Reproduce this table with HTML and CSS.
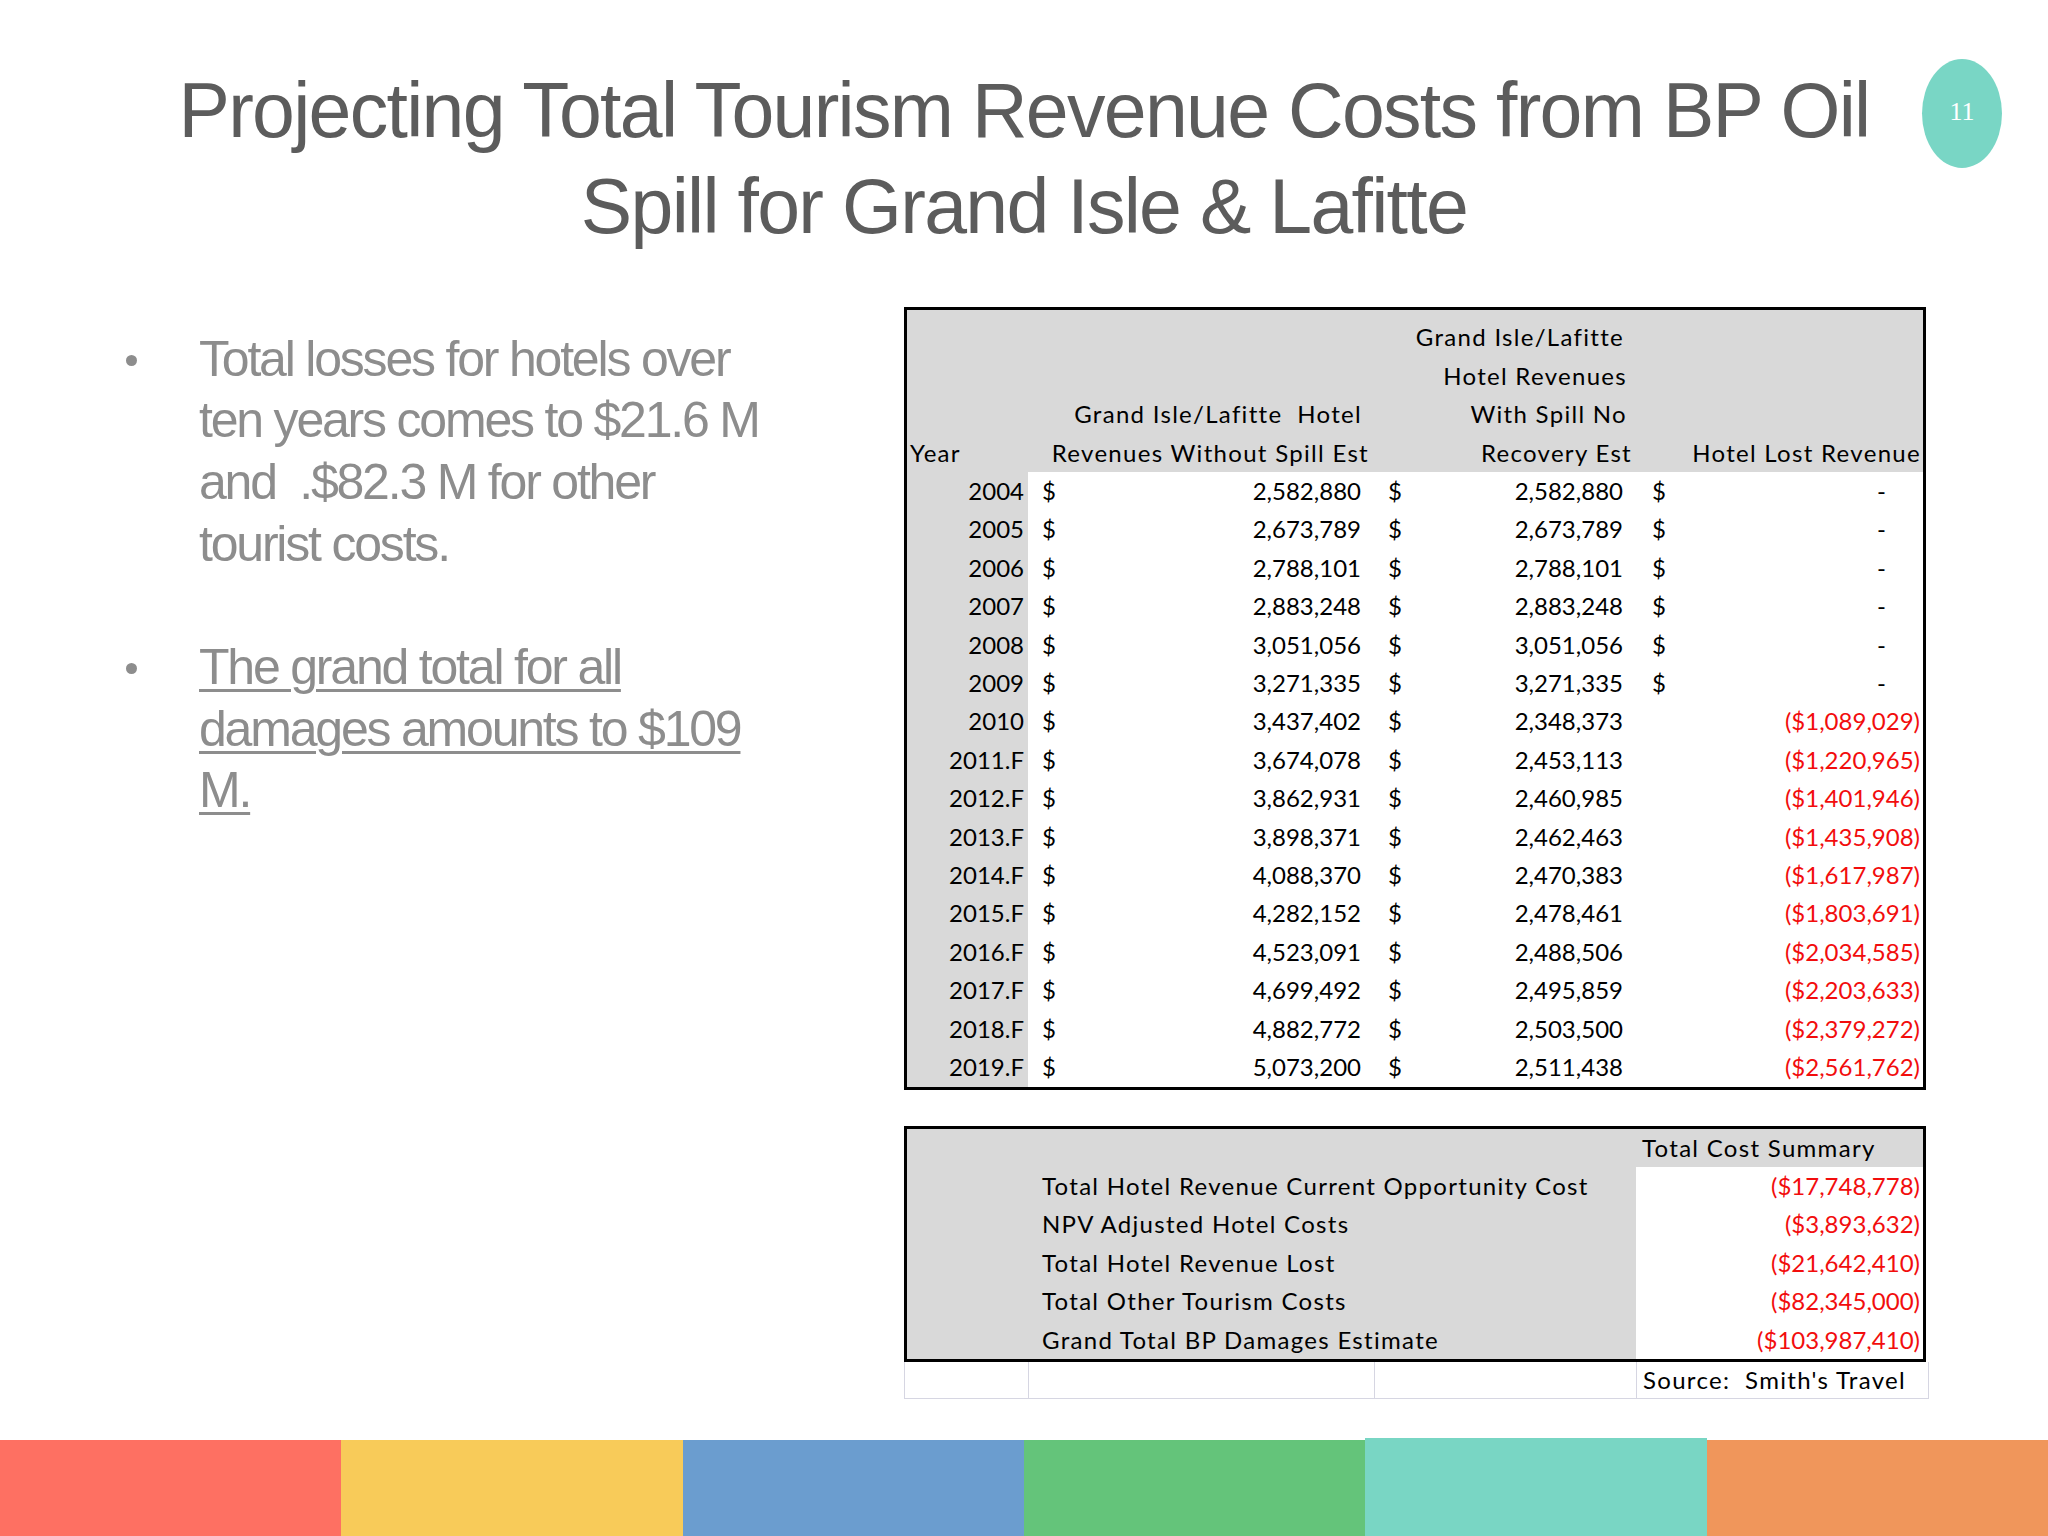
FILE: index.html
```html
<!DOCTYPE html>
<html>
<head>
<meta charset="utf-8">
<title>Projecting Total Tourism Revenue Costs</title>
<link rel="stylesheet" href="styles.css">
</head>
<body>
<div class="slide">
  <h1 class="title">Projecting Total Tourism Revenue Costs from BP Oil<br>Spill for Grand Isle &amp; Lafitte</h1>
  <div class="badge">11</div>

  <div class="main">
    <ul class="bullets">
      <li><span class="btext">Total losses for hotels over ten years comes to $21.6 M and&nbsp; .$82.3 M for other tourist costs.</span></li>
      <li><span class="btext"><u>The grand total for all damages amounts to $109 M.</u></span></li>
    </ul>

    <div class="tables">
      <div class="sheet">
        <table class="grid">
          <colgroup><col class="ca"><col class="cb"><col class="cc"><col class="cd"></colgroup>
          <thead>
            <tr class="head">
              <th class="h-a">Year</th>
              <th class="h-b"><span class="hl hl-b1">Grand Isle/Lafitte&nbsp; Hotel</span><span class="hl">Revenues Without Spill Est</span></th>
              <th class="h-c"><span class="hl hl-c1">Grand Isle/Lafitte</span><span class="hl hl-c2">Hotel Revenues</span><span class="hl hl-c2">With Spill No</span><span class="hl">Recovery Est</span></th>
              <th class="h-d"><span class="hl">Hotel Lost Revenue</span></th>
            </tr>
          </thead>
          <tbody>
            <tr><td class="yr">2004</td><td><div class="m"><span>$</span><span>2,582,880</span></div></td><td><div class="m"><span>$</span><span>2,582,880</span></div></td><td><div class="m md"><span>$</span><span>-</span></div></td></tr>
            <tr><td class="yr">2005</td><td><div class="m"><span>$</span><span>2,673,789</span></div></td><td><div class="m"><span>$</span><span>2,673,789</span></div></td><td><div class="m md"><span>$</span><span>-</span></div></td></tr>
            <tr><td class="yr">2006</td><td><div class="m"><span>$</span><span>2,788,101</span></div></td><td><div class="m"><span>$</span><span>2,788,101</span></div></td><td><div class="m md"><span>$</span><span>-</span></div></td></tr>
            <tr><td class="yr">2007</td><td><div class="m"><span>$</span><span>2,883,248</span></div></td><td><div class="m"><span>$</span><span>2,883,248</span></div></td><td><div class="m md"><span>$</span><span>-</span></div></td></tr>
            <tr><td class="yr">2008</td><td><div class="m"><span>$</span><span>3,051,056</span></div></td><td><div class="m"><span>$</span><span>3,051,056</span></div></td><td><div class="m md"><span>$</span><span>-</span></div></td></tr>
            <tr><td class="yr">2009</td><td><div class="m"><span>$</span><span>3,271,335</span></div></td><td><div class="m"><span>$</span><span>3,271,335</span></div></td><td><div class="m md"><span>$</span><span>-</span></div></td></tr>
            <tr><td class="yr">2010</td><td><div class="m"><span>$</span><span>3,437,402</span></div></td><td><div class="m"><span>$</span><span>2,348,373</span></div></td><td class="neg">($1,089,029)</td></tr>
            <tr><td class="yr">2011.F</td><td><div class="m"><span>$</span><span>3,674,078</span></div></td><td><div class="m"><span>$</span><span>2,453,113</span></div></td><td class="neg">($1,220,965)</td></tr>
            <tr><td class="yr">2012.F</td><td><div class="m"><span>$</span><span>3,862,931</span></div></td><td><div class="m"><span>$</span><span>2,460,985</span></div></td><td class="neg">($1,401,946)</td></tr>
            <tr><td class="yr">2013.F</td><td><div class="m"><span>$</span><span>3,898,371</span></div></td><td><div class="m"><span>$</span><span>2,462,463</span></div></td><td class="neg">($1,435,908)</td></tr>
            <tr><td class="yr">2014.F</td><td><div class="m"><span>$</span><span>4,088,370</span></div></td><td><div class="m"><span>$</span><span>2,470,383</span></div></td><td class="neg">($1,617,987)</td></tr>
            <tr><td class="yr">2015.F</td><td><div class="m"><span>$</span><span>4,282,152</span></div></td><td><div class="m"><span>$</span><span>2,478,461</span></div></td><td class="neg">($1,803,691)</td></tr>
            <tr><td class="yr">2016.F</td><td><div class="m"><span>$</span><span>4,523,091</span></div></td><td><div class="m"><span>$</span><span>2,488,506</span></div></td><td class="neg">($2,034,585)</td></tr>
            <tr><td class="yr">2017.F</td><td><div class="m"><span>$</span><span>4,699,492</span></div></td><td><div class="m"><span>$</span><span>2,495,859</span></div></td><td class="neg">($2,203,633)</td></tr>
            <tr><td class="yr">2018.F</td><td><div class="m"><span>$</span><span>4,882,772</span></div></td><td><div class="m"><span>$</span><span>2,503,500</span></div></td><td class="neg">($2,379,272)</td></tr>
            <tr><td class="yr">2019.F</td><td><div class="m"><span>$</span><span>5,073,200</span></div></td><td><div class="m"><span>$</span><span>2,511,438</span></div></td><td class="neg">($2,561,762)</td></tr>
          </tbody>
        </table>
      </div>

      <div class="sheet sheet2">
        <table class="grid summary">
          <colgroup><col class="ca"><col class="cb"><col class="cc"><col class="cd"></colgroup>
          <tbody>
            <tr><td></td><td colspan="2"></td><td class="sum-head">Total Cost Summary</td></tr>
            <tr><td></td><td colspan="2" class="lbl">Total Hotel Revenue Current Opportunity Cost</td><td class="neg val">($17,748,778)</td></tr>
            <tr><td></td><td colspan="2" class="lbl">NPV Adjusted Hotel Costs</td><td class="neg val">($3,893,632)</td></tr>
            <tr><td></td><td colspan="2" class="lbl">Total Hotel Revenue Lost</td><td class="neg val">($21,642,410)</td></tr>
            <tr><td></td><td colspan="2" class="lbl">Total Other Tourism Costs</td><td class="neg val">($82,345,000)</td></tr>
            <tr><td></td><td colspan="2" class="lbl">Grand Total BP Damages Estimate</td><td class="neg val">($103,987,410)</td></tr>
          </tbody>
        </table>
      </div>

      <table class="source">
        <colgroup><col class="sa"><col class="cb"><col class="cc"><col class="sd"></colgroup>
        <tbody>
          <tr><td></td><td></td><td></td><td class="src">Source:  Smith's Travel</td></tr>
        </tbody>
      </table>
    </div>
  </div>

  <div class="bars">
    <div class="bar coral"></div>
    <div class="bar yellow"></div>
    <div class="bar blue"></div>
    <div class="bar green"></div>
    <div class="bar teal"></div>
    <div class="bar orange"></div>
  </div>
</div>
</body>
</html>
```

FILE: styles.css
```css
html, body {
  margin: 0;
  padding: 0;
  background: #ffffff;
}

.slide {
  position: relative;
  width: 2048px;
  height: 1536px;
  display: flex;
  flex-direction: column;
  overflow: hidden;
  background: #ffffff;
}

.title {
  margin: 0;
  padding-top: 62px;
  font-family: "Liberation Sans", Arial, sans-serif;
  font-weight: 400;
  font-size: 77px;
  line-height: 96px;
  letter-spacing: -1.7px;
  color: #5c5c5c;
  text-align: center;
}

.badge {
  position: absolute;
  left: 1922px;
  top: 59px;
  width: 80px;
  height: 109px;
  border-radius: 50%;
  background: #79d6c5;
  color: #ffffff;
  font-family: "Liberation Serif", "Times New Roman", serif;
  font-size: 26px;
  line-height: 1;
  display: flex;
  align-items: center;
  justify-content: center;
  padding-bottom: 4px;
  box-sizing: border-box;
}

.main {
  display: flex;
  margin-top: 53px;
}

.bullets {
  width: 904px;
  box-sizing: border-box;
  margin: 0;
  padding: 21.5px 0 0 126px;
  list-style: none;
  font-family: "Liberation Sans", Arial, sans-serif;
  font-size: 50px;
  line-height: 61.7px;
  letter-spacing: -2.2px;
  color: #8d8d8d;
}

.bullets li {
  display: flex;
}

.bullets li + li {
  margin-top: 61.7px;
}

.bullets li::before {
  content: "";
  flex: none;
  width: 11px;
  height: 11px;
  border-radius: 50%;
  background: #8d8d8d;
  margin-top: 26px;
  margin-right: 62px;
}

.btext {
  width: 580px;
}

.btext u {
  text-decoration-thickness: 3px;
  text-underline-offset: 5px;
}

.tables {
  width: 1022px;
}

.sheet {
  border: 3px solid #000000;
}

.sheet2 {
  margin-top: 36px;
}

.grid {
  border-collapse: collapse;
  table-layout: fixed;
  width: 1016px;
  font-family: Lato, "Open Sans", sans-serif;
  font-size: 24px;
  color: #000000;
}

.ca { width: 121px; }
.cb { width: 346px; }
.cc { width: 262px; }
.cd { width: 287px; }

.grid td,
.grid th {
  padding: 0;
  height: 38.4px;
  line-height: 38.4px;
  white-space: nowrap;
  overflow: visible;
}

.grid .head th {
  height: 162px;
  vertical-align: bottom;
  font-weight: 400;
  background: #d9d9d9;
  text-align: right;
  letter-spacing: 1.3px;
}

.grid .head .h-a {
  text-align: left;
  padding-left: 3px;
}

.grid .head .h-b { padding-right: 5px; }
.grid .head .h-c { padding-right: 4px; }
.grid .head .h-d { padding-right: 2px; }

.hl {
  display: block;
  height: 38.4px;
  line-height: 38.4px;
}

.hl-b1 { padding-right: 7px; white-space: pre; }
.hl-c1 { padding-right: 8px; }
.hl-c2 { padding-right: 5px; }

.grid .yr {
  background: #d9d9d9;
  text-align: right;
  padding-right: 4px;
}

.m {
  display: flex;
  justify-content: space-between;
  padding: 0 13px 0 14px;
}

.m.md {
  padding: 0 37px 0 16px;
}

.grid .neg {
  color: #f20d0d;
  text-align: right;
  padding-right: 3px;
}

.summary td {
  background: #d9d9d9;
}

.grid .lbl {
  padding-left: 14px;
  letter-spacing: 1.3px;
}

.summary .val {
  background: #ffffff;
}

.grid .sum-head {
  padding-left: 6px;
  text-align: left;
  letter-spacing: 1.3px;
}

.source {
  border-collapse: collapse;
  table-layout: fixed;
  width: 1024px;
  font-family: Lato, "Open Sans", sans-serif;
  font-size: 24px;
  color: #000000;
  border-left: 1px solid #d6d6e2;
  border-right: 1px solid #d6d6e2;
  border-bottom: 1px solid #d6d6e2;
}

.sa { width: 124px; }
.sd { width: 292px; }

.source td {
  height: 36px;
  padding: 0;
  line-height: 36px;
  border-right: 1px solid #d6d6e2;
}

.source .src {
  white-space: pre;
  padding-left: 6px;
  letter-spacing: 1.3px;
}

.bars {
  margin-top: auto;
  display: flex;
  align-items: flex-end;
  height: 98px;
}

.bar {
  flex: 1;
  height: 96px;
}

.coral { background: #fe7062; }
.yellow { background: #f8cb59; }
.blue { background: #6b9dcf; }
.green { background: #64c47a; }
.teal { background: #79d6c4; height: 98px; }
.orange { background: #f0965b; }
```
